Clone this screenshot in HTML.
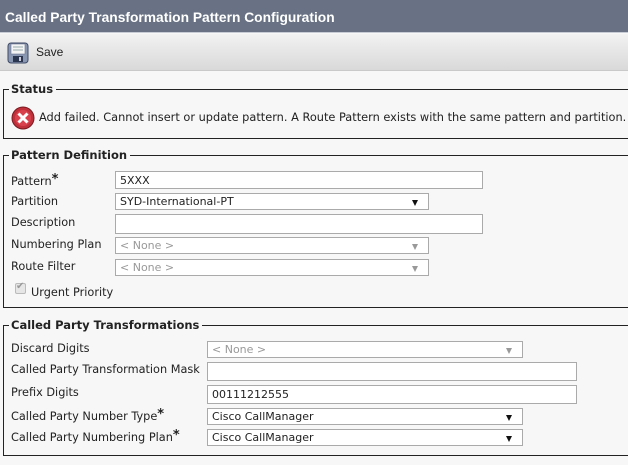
<!DOCTYPE html>
<html><head><style>
*{box-sizing:border-box;margin:0;padding:0}
body{width:628px;height:465px;overflow:hidden;background:#f7f7f7;font-family:"DejaVu Sans","Liberation Sans",sans-serif;font-size:11.3px;color:#222;position:relative}
.hdr{position:absolute;left:0;top:0;width:628px;height:33px;background:#687284;color:#fff;font-weight:bold;padding:10px 0 0 5px;font-family:"Liberation Sans",sans-serif;font-size:13.8px;border-bottom:1px solid #c8ccd4}
.tb{position:absolute;left:0;top:34px;width:628px;height:37px;background:linear-gradient(#f2f2f2,#d9d9d9);border-bottom:1px solid #c9c9c9}
.fs{position:absolute;left:3px;width:640px;border:1px solid #222}
.lg{position:absolute;top:-8px;left:5px;background:#f7f7f7;font-weight:bold;padding:0 3px 0 2px;font-size:11.5px}
.a{position:absolute;white-space:nowrap}
.in{position:absolute;background:#fff;border:1px solid #aaa;height:18px;padding:2px 4px;font-size:11px}
.sel{position:absolute;background:#fff;border:1px solid #aaa;height:17px;padding:1px 4px;font-size:11px}
.sel:after{content:"";position:absolute;right:10px;top:6px;border-left:3.5px solid transparent;border-right:3.5px solid transparent;border-top:6px solid #111}
.dis{color:#999}.dis:after{border-top-color:#999}
</style></head><body>
<div class="hdr">Called Party Transformation Pattern Configuration</div>
<div class="tb">
<svg style="position:absolute;left:7px;top:8px" width="22" height="22" viewBox="0 0 22 22"><rect x="1" y="1" width="20" height="20" rx="3" fill="#8a97b3" stroke="#3d4a66"/><rect x="4" y="2" width="14" height="10" fill="#f4f4f4" stroke="#6a7590" stroke-width=".6"/><line x1="6" y1="5" x2="16" y2="5" stroke="#9aa" /><line x1="6" y1="8" x2="16" y2="8" stroke="#9aa"/><rect x="6" y="14" width="10" height="6" fill="#2a3550"/><rect x="12" y="15" width="2" height="4" fill="#ccd"/></svg>
<span class="a" style="left:36px;top:11px;font-family:'Liberation Sans',sans-serif;font-size:12px">Save</span>
</div>
<div class="fs" style="top:89px;height:50px"><span class="lg">Status</span></div>
<svg style="position:absolute;left:11px;top:106px" width="24" height="24" viewBox="0 0 24 24"><circle cx="12" cy="12" r="11" fill="#c0303a" stroke="#7a1a20"/><circle cx="12" cy="12" r="8" fill="#d9424c"/><path d="M7.5 7.5L16.5 16.5M16.5 7.5L7.5 16.5" stroke="#fff" stroke-width="3"/></svg>
<span class="a" style="left:39px;top:110px;font-size:11.35px">Add failed. Cannot insert or update pattern. A Route Pattern exists with the same pattern and partition.</span>

<div class="fs" style="top:155px;height:153px"><span class="lg">Pattern Definition</span></div>
<span class="a" style="left:11px;top:172px">Pattern<b style="font-size:13px;vertical-align:2px">*</b></span>
<div class="in" style="left:115px;top:171px;width:368px">5XXX</div>
<span class="a" style="left:11px;top:195px">Partition</span>
<div class="sel" style="left:115px;top:193px;width:314px">SYD-International-PT</div>
<span class="a" style="left:11px;top:216px">Description</span>
<div class="in" style="left:115px;top:214px;width:368px;height:20px"></div>
<span class="a" style="left:11px;top:238px">Numbering Plan</span>
<div class="sel dis" style="left:115px;top:237px;width:314px">&lt; None &gt;</div>
<span class="a" style="left:11px;top:260px">Route Filter</span>
<div class="sel dis" style="left:115px;top:259px;width:314px">&lt; None &gt;</div>
<div class="a" style="left:15px;top:283px;width:11px;height:11px;border:1px solid #bbb;background:#e6e6e6;border-radius:2px"></div>
<span class="a" style="left:16px;top:281px;color:#999;font-size:10px">&#10004;</span>
<span class="a" style="left:31px;top:286px">Urgent Priority</span>

<div class="fs" style="top:325px;height:131px"><span class="lg">Called Party Transformations</span></div>
<span class="a" style="left:11px;top:342px">Discard Digits</span>
<div class="sel dis" style="left:207px;top:341px;width:316px">&lt; None &gt;</div>
<span class="a" style="left:11px;top:363px">Called Party Transformation Mask</span>
<div class="in" style="left:207px;top:362px;width:370px;height:19px"></div>
<span class="a" style="left:11px;top:386px">Prefix Digits</span>
<div class="in" style="left:207px;top:385px;width:370px;height:19px">00111212555</div>
<span class="a" style="left:11px;top:407px">Called Party Number Type<b style="font-size:13px;vertical-align:2px">*</b></span>
<div class="sel" style="left:207px;top:408px;width:316px">Cisco CallManager</div>
<span class="a" style="left:11px;top:428px">Called Party Numbering Plan<b style="font-size:13px;vertical-align:2px">*</b></span>
<div class="sel" style="left:207px;top:429px;width:316px">Cisco CallManager</div>
</body></html>
